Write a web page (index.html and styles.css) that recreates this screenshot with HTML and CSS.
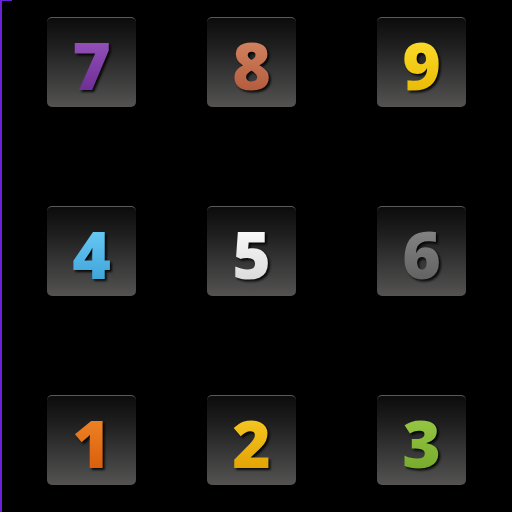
FILE: index.html
```html
<!DOCTYPE html>
<html>
<head>
<meta charset="utf-8">
<link rel="stylesheet" href="styles.css">
</head>
<body>
<div class="screen">
  <div class="corner"></div>
  <div class="pad">
    <div class="key"><span class="d d7">7</span></div>
    <div class="key"><span class="d d8">8</span></div>
    <div class="key"><span class="d d9">9</span></div>
    <div class="key"><span class="d d4">4</span></div>
    <div class="key"><span class="d d5">5</span></div>
    <div class="key"><span class="d d6">6</span></div>
    <div class="key"><span class="d d1">1</span></div>
    <div class="key"><span class="d d2">2</span></div>
    <div class="key"><span class="d d3">3</span></div>
  </div>
</div>
</body>
</html>
```
FILE: styles.css
```css
html, body {
  margin: 0;
  padding: 0;
  background: #000;
  width: 512px;
  height: 512px;
  overflow: hidden;
}
.screen {
  position: relative;
  width: 510px;
  height: 512px;
  border-left: 2px solid #6a22d8;
}
.corner {
  position: absolute;
  left: 0;
  top: 0;
  width: 10px;
  height: 1px;
  background: #6a22d8;
}
.pad {
  display: grid;
  grid-template-columns: 160px 170px 90px;
  grid-template-rows: 189px 189px 90px;
  padding-left: 45px;
  padding-top: 17px;
}
.key {
  width: 89px;
  height: 90px;
  box-sizing: border-box;
  border-radius: 5px;
  background: linear-gradient(to bottom, #0c0c0c 0%, #1e1e1e 30%, #3c3c3c 70%, #545352 100%);
  border-top: 1px solid #5a5a5a;
  display: flex;
  align-items: center;
  justify-content: center;
}
.d {
  font-family: "Open Sans", "DejaVu Sans", sans-serif;
  font-weight: 800;
  font-size: 66px;
  line-height: 1;
  color: transparent;
  -webkit-background-clip: text;
  background-clip: text;
  filter: drop-shadow(2px 2px 1px rgba(0,0,0,0.85));
  margin-top: 2px;
}
.d7 { background-image: linear-gradient(#9a58c0, #6a2a90); }
.d8 { background-image: linear-gradient(#d88a66, #b0583a); }
.d9 { background-image: linear-gradient(#ffe030, #e8b800); }
.d4 { background-image: linear-gradient(#70d0f8, #3aa0d8); }
.d5 { background-image: linear-gradient(#ffffff, #d8d8d8); }
.d6 { background-image: linear-gradient(#8a8a8a, #5e5e5e); }
.d1 { background-image: linear-gradient(#f08a2a, #d85a08); }
.d2 { background-image: linear-gradient(#f8cc28, #e0a000); }
.d3 { background-image: linear-gradient(#9ccc48, #74a82a); }
```
